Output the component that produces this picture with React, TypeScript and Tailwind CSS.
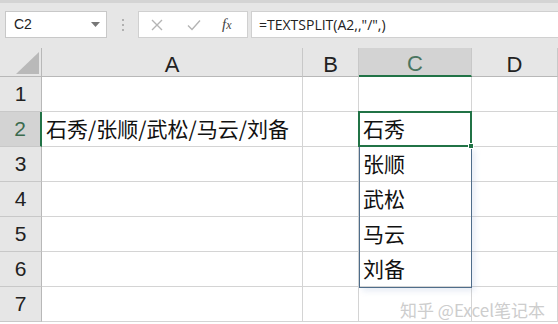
import React from "react";

const cols = ["A", "B", "C", "D"];
const rows = [1, 2, 3, 4, 5, 6, 7];

// column C values (spilled from C2)
const spill: Record<number, string> = {
  2: "石秀",
  3: "张顺",
  4: "武松",
  5: "马云",
  6: "刘备",
};

const cjk = { fontFamily: '"Noto Sans CJK SC", "Noto Sans", sans-serif' };

const FormulaBar = () => (
  <div className="h-[48px] bg-[#e6e6e6] border-t-[3px] border-[#d4d4d4] flex items-start pt-[8px] pl-[5px] gap-0">
    <div className="w-[102px] h-[27px] bg-white border border-[#c8c8c8] flex items-center justify-between pl-[8px] pr-[6px]">
      <span className="text-[14px] text-[#222]" style={{ fontFamily: '"Liberation Sans", sans-serif' }}>
        C2
      </span>
      <svg width="9" height="5" viewBox="0 0 9 5">
        <path d="M0 0 L9 0 L4.5 5 Z" fill="#777" />
      </svg>
    </div>
    <div className="w-[31px] h-[27px] flex flex-col items-center justify-center gap-[3px]">
      <span className="w-[2px] h-[2px] bg-[#b0b0b0]" />
      <span className="w-[2px] h-[2px] bg-[#b0b0b0]" />
      <span className="w-[2px] h-[2px] bg-[#b0b0b0]" />
    </div>
    <div className="w-[110px] h-[27px] bg-white border border-[#d0d0d0] flex items-center pl-[12px]">
      <svg width="12" height="12" viewBox="0 0 12 12">
        <path d="M1 1 L11 11 M11 1 L1 11" stroke="#b4b4b4" strokeWidth="1.4" />
      </svg>
      <svg width="14" height="12" viewBox="0 0 14 12" className="ml-[24px]">
        <path d="M1 6.5 L5 10.5 L13 1.5" stroke="#b4b4b4" strokeWidth="1.4" fill="none" />
      </svg>
      <span
        className="ml-[21px] text-[15px] italic text-[#444]"
        style={{ fontFamily: '"Liberation Serif", serif' }}
      >
        f<span className="text-[12px]">x</span>
      </span>
    </div>
    <div className="ml-[3px] flex-1 h-[27px] bg-white border-y border-l border-[#d0d0d0] flex items-center pl-[7px]">
      <span className="text-[14px] text-[#222]" style={{ fontFamily: '"Open Sans", "Liberation Sans", sans-serif' }}>
        =TEXTSPLIT(A2,,"/",)
      </span>
    </div>
  </div>
);

export default function App() {
  return (
    <div className="w-[558px] h-[324px] overflow-hidden bg-white relative">
      <FormulaBar />
      <div
        className="grid grid-cols-[42px_261px_56px_113px_86px] grid-rows-[29px_repeat(7,35px)] relative"
        style={{ fontFamily: '"Liberation Sans", sans-serif' }}
      >
        {/* corner */}
        <div className="bg-[#e6e6e6] border-r border-b border-[#b8b8b8] flex items-end justify-end pr-[2px] pb-[2px]">
          <svg width="23" height="22" viewBox="0 0 23 22">
            <path d="M23 0 L23 22 L0 22 Z" fill="#b9b9b9" />
          </svg>
        </div>
        {cols.map((c) => (
          <div
            key={c}
            className={
              c === "C"
                ? "bg-[#d3d3d3] border-r border-[#c8c8c8] border-b-2 border-b-[#217346] flex items-center justify-center text-[22px] text-[#4a7560] pt-[4px]"
                : "bg-[#e6e6e6] border-r border-b border-[#c8c8c8] border-b-[#b8b8b8] flex items-center justify-center text-[22px] text-[#222] pt-[4px]"
            }
          >
            {c}
          </div>
        ))}
        {rows.map((r) => (
          <React.Fragment key={r}>
            <div
              className={
                r === 2
                  ? "bg-[#d3d3d3] border-r-2 border-r-[#217346] border-b border-[#c8c8c8] flex items-center justify-center text-[21px] text-[#3b6b4e]"
                  : "bg-[#e6e6e6] border-r border-r-[#b8b8b8] border-b border-[#c8c8c8] flex items-center justify-center text-[21px] text-[#222]"
              }
            >
              {r}
            </div>
            <div className="border-r border-b border-[#d4d4d4] flex items-center pl-[4px] text-[21px] text-[#111] whitespace-nowrap" style={cjk}>
              {r === 2 ? "石秀/张顺/武松/马云/刘备" : ""}
            </div>
            <div className="border-r border-b border-[#d4d4d4]" />
            <div
              className={
                r === 2
                  ? "border-2 border-[#217346] -ml-px -mt-px flex items-center pl-[3px] text-[21px] text-[#111] relative z-10"
                  : "border-r border-b border-[#d4d4d4] flex items-center pl-[4px] text-[21px] text-[#111]"
              }
              style={cjk}
            >
              {spill[r] ?? ""}
              {r === 2 && (
                <span className="absolute -right-[4px] -bottom-[4px] w-[6px] h-[6px] bg-[#217346] border border-white" />
              )}
            </div>
            <div className="border-r border-b border-[#d4d4d4]" />
          </React.Fragment>
        ))}
        {/* spill range outline C3:C6 */}
        <div className="absolute left-[359px] top-[99px] w-[113px] h-[141px] border border-[#4f6d8a] border-t-0 pointer-events-none shadow-[3px_3px_6px_rgba(120,150,200,0.18)]" />
      </div>
      {/* watermark */}
      <div
        className="absolute left-[400px] top-[297px] text-[17px] text-[#cdcdcd] whitespace-nowrap"
        style={cjk}
      >
        知乎 @Excel笔记本
      </div>
    </div>
  );
}
